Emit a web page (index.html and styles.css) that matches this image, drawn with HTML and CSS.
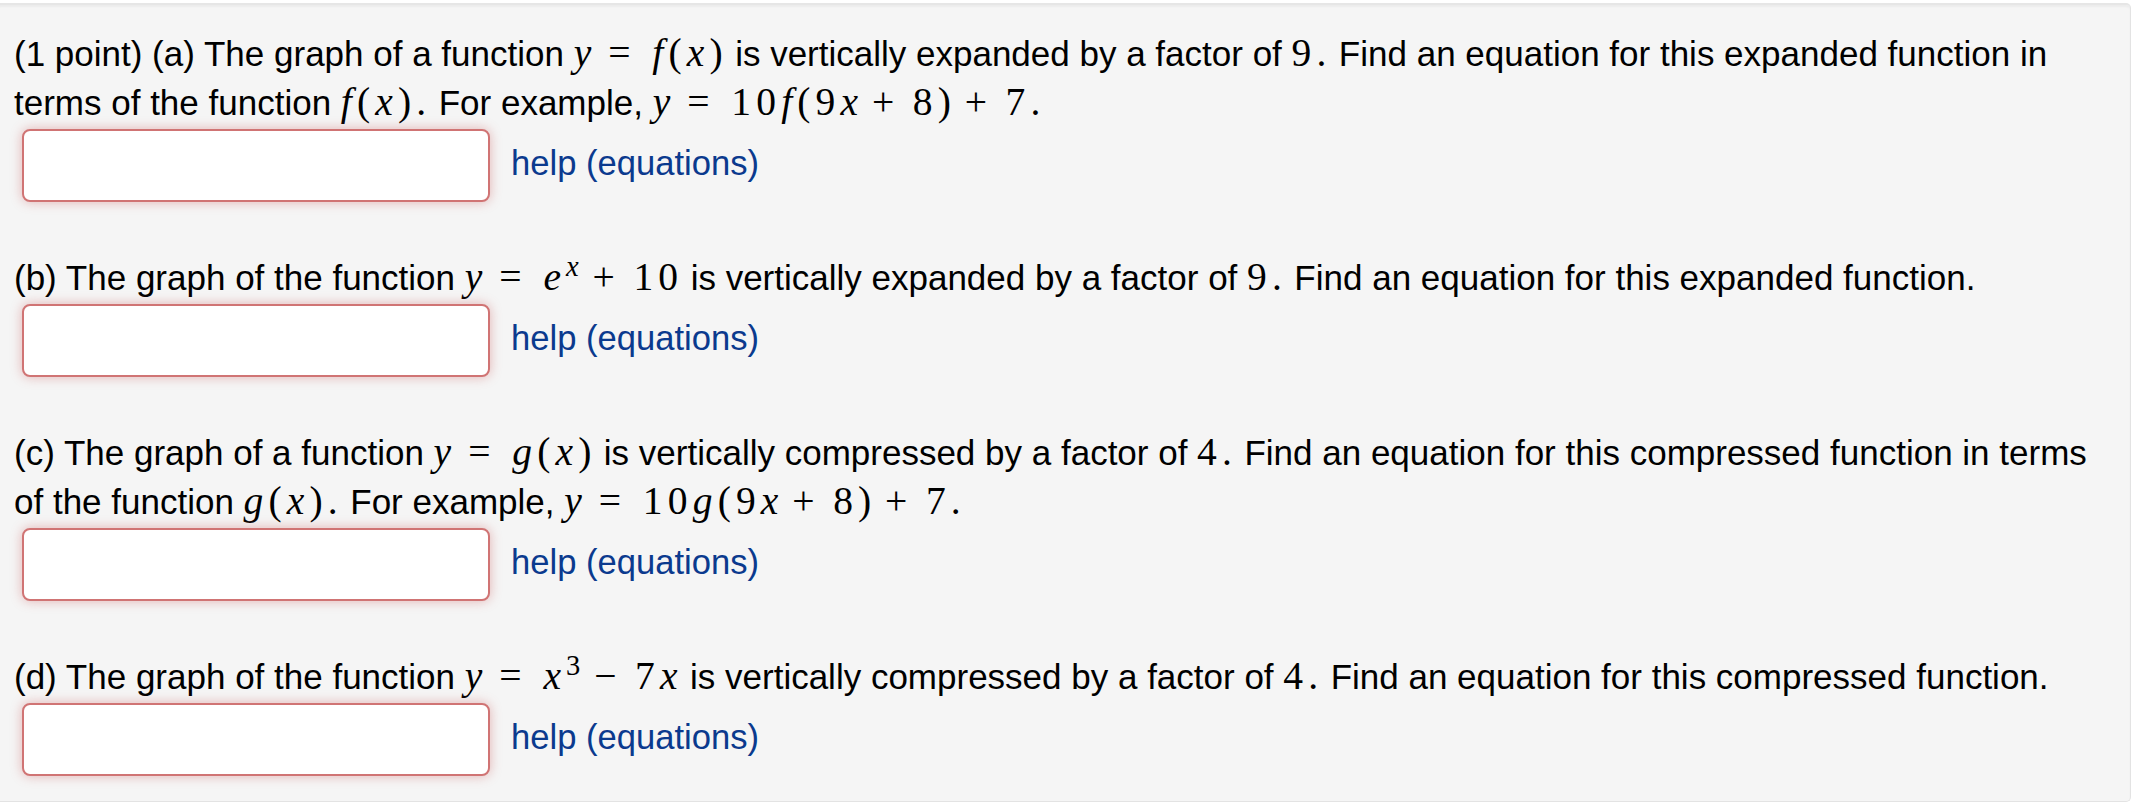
FILE: index.html
```html
<!DOCTYPE html>
<html lang="en">
<head>
    <meta charset="UTF-8">
    <title>Problem</title>
    <link rel="stylesheet" href="styles.css">
</head>
<body>
    <div class="problem-well">
        <div class="part">
            <p class="q">(1 point) (a) The graph of a function <span class="m"><i>y</i><span class="o">=</span><i>f</i>(<i>x</i>)</span> is vertically expanded by a factor of <span class="m">9.</span> Find an equation for this expanded function in terms of the function <span class="m"><i>f</i>(<i>x</i>).</span> For example, <span class="m"><i>y</i><span class="o">=</span>10<i>f</i>(9<i>x</i><span class="p">+</span>8)<span class="p">+</span>7.</span></p>
            <div class="answer-row"><input class="answer" type="text"><a class="help" href="#">help (equations)</a></div>
        </div>
        <div class="part">
            <p class="q">(b) The graph of the function <span class="m"><i>y</i><span class="o">=</span><i>e</i><sup><i>x</i></sup><span class="p">+</span>10</span> is vertically expanded by a factor of <span class="m">9.</span> Find an equation for this expanded function.</p>
            <div class="answer-row"><input class="answer" type="text"><a class="help" href="#">help (equations)</a></div>
        </div>
        <div class="part">
            <p class="q">(c) The graph of a function <span class="m"><i>y</i><span class="o">=</span><i>g</i>(<i>x</i>)</span> is vertically compressed by a factor of <span class="m">4.</span> Find an equation for this compressed function in terms of the function <span class="m"><i>g</i>(<i>x</i>).</span> For example, <span class="m"><i>y</i><span class="o">=</span>10<i>g</i>(9<i>x</i><span class="p">+</span>8)<span class="p">+</span>7.</span></p>
            <div class="answer-row"><input class="answer" type="text"><a class="help" href="#">help (equations)</a></div>
        </div>
        <div class="part">
            <p class="q">(d) The graph of the function <span class="m"><i>y</i><span class="o">=</span><i>x</i><sup>3</sup><span class="p">&minus;</span>7<i>x</i></span> is vertically compressed by a factor of <span class="m">4.</span> Find an equation for this compressed function.</p>
            <div class="answer-row"><input class="answer" type="text"><a class="help" href="#">help (equations)</a></div>
        </div>
    </div>
</body>
</html>
```

FILE: styles.css
```css
body { margin: 0; padding: 0; background-color: #ffffff; font-family: "Liberation Sans", Arial, sans-serif; color: #000; }
.problem-well { margin: 3px 1px 0 -4px; padding: 24px 16px 25px 17px; background-color: #f5f5f5; border: 1px solid #e3e3e3; border-top: 2px solid #e6e6e6; border-radius: 5px; box-shadow: inset 0 2px 2px rgba(0,0,0,0.04); }
.part + .part { margin-top: 51px; }
.q { margin: 0; font-size: 35px; line-height: 49px; }
.m { font-family: "Liberation Serif", "Times New Roman", serif; font-size: 1.13em; line-height: 0; letter-spacing: 0.13em; margin-right: -0.06em; white-space: nowrap; }
.m i { font-style: italic; }
.m sup { font-size: 0.72em; line-height: 0; }
.m .o { margin: 0 0.42em 0 0.3em; }
.m .p { margin: 0 0.34em 0 0.22em; }
.answer-row { display: flex; align-items: center; margin-top: 2px; }
.answer { width: 468px; height: 73px; box-sizing: border-box; margin: 0 21px 0 8px; border: 2px solid #d07474; border-radius: 8px; background: #fff; box-shadow: 0 0 12px rgba(200,80,80,0.4); outline: none; font-size: 30px; }
.help { font-size: 34.6px; line-height: 49px; color: #0b3a8e; text-decoration: none; margin-bottom: 4px; }
```
